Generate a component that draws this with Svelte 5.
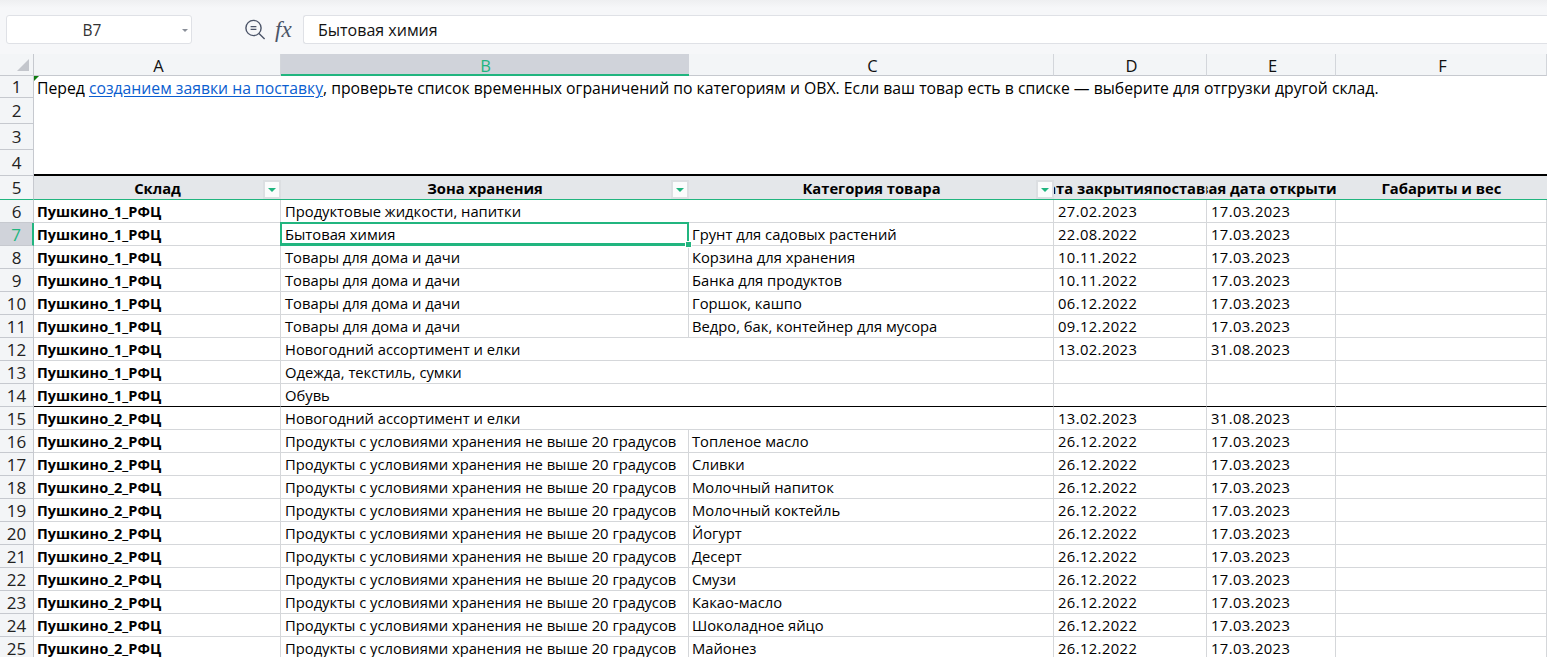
<script>
  const cols = ['A', 'B', 'C', 'D', 'E', 'F'];
  const c20 = 'Продукты с условиями хранения не выше 20 градусов';
  const home = 'Товары для дома и дачи';
  const p1 = 'Пушкино_1_РФЦ';
  const p2 = 'Пушкино_2_РФЦ';
  const x = '26.12.2022';
  const y = '17.03.2023';
  const rows = [
    [6, p1, 'Продуктовые жидкости, напитки', null, '27.02.2023', y],
    [7, p1, 'Бытовая химия', 'Грунт для садовых растений', '22.08.2022', y],
    [8, p1, home, 'Корзина для хранения', '10.11.2022', y],
    [9, p1, home, 'Банка для продуктов', '10.11.2022', y],
    [10, p1, home, 'Горшок, кашпо', '06.12.2022', y],
    [11, p1, home, 'Ведро, бак, контейнер для мусора', '09.12.2022', y],
    [12, p1, 'Новогодний ассортимент и елки', null, '13.02.2023', '31.08.2023'],
    [13, p1, 'Одежда, текстиль, сумки', null, '', ''],
    [14, p1, 'Обувь', null, '', ''],
    [15, p2, 'Новогодний ассортимент и елки', null, '13.02.2023', '31.08.2023'],
    [16, p2, c20, 'Топленое масло', x, y],
    [17, p2, c20, 'Сливки', x, y],
    [18, p2, c20, 'Молочный напиток', x, y],
    [19, p2, c20, 'Молочный коктейль', x, y],
    [20, p2, c20, 'Йогурт', x, y],
    [21, p2, c20, 'Десерт', x, y],
    [22, p2, c20, 'Смузи', x, y],
    [23, p2, c20, 'Какао-масло', x, y],
    [24, p2, c20, 'Шоколадное яйцо', x, y],
    [25, p2, c20, 'Майонез', x, y]
  ];
</script>

<div class="page">
  <div class="toolbar">
    <div class="namebox"><span>B7</span><i class="caret"></i></div>
    <div class="fxicons">
      <svg width="22" height="22" viewBox="0 0 22 22" fill="none" stroke="#4b5468" stroke-width="1.4">
        <circle cx="9.5" cy="9" r="7.6" />
        <path d="M15 14.6 20.6 20M6.6 7.6h5.8M6.6 10.4h5.8" />
      </svg>
      <span class="fx">fx</span>
    </div>
    <div class="formula">Бытовая химия</div>
  </div>

  <div class="sheet">
    <div class="corner"><i></i></div>
    {#each cols as c}
      <div class="colhead" class:active={c === 'B'}>{c}</div>
    {/each}

    {#each [1, 2, 3, 4] as n, i}
      <div class="rowhead tall" style="grid-row: {i + 2}">{n}</div>
    {/each}
    <div class="note">
      <i class="flag"></i>
      Перед <a href="#top">созданием заявки на поставку</a>, проверьте список временных ограничений по категориям и ОВХ. Если ваш товар есть в списке — выберите для отгрузки другой склад.
    </div>

    <div class="rowhead hrow">5</div>
    <div class="th">Склад<b class="filter"><i></i></b></div>
    <div class="th">Зона хранения<b class="filter"><i></i></b></div>
    <div class="th">Категория товара<b class="filter"><i></i></b></div>
    <div class="th"><span>Дата закрытияпоставки</span></div>
    <div class="th"><span>Новая дата открытияпо</span></div>
    <div class="th">Габариты и вес</div>

    {#each rows as r}
      <div class="rowhead" class:sel={r[0] === 7}>{r[0]}</div>
      <div class="td bold" class:heavy={r[0] === 14}>{r[1]}</div>
      {#if r[3] === null}
        <div class="td wide zone" class:heavy={r[0] === 14}>{r[2]}</div>
      {:else}
        <div class="td zone" class:current={r[0] === 7}>{r[2]}{#if r[0] === 7}<i class="handle"></i>{/if}</div>
        <div class="td">{r[3]}</div>
      {/if}
      <div class="td date" class:heavy={r[0] === 14}>{r[4]}</div>
      <div class="td date" class:heavy={r[0] === 14}>{r[5]}</div>
      <div class="td" class:heavy={r[0] === 14}></div>
    {/each}
  </div>
</div>

<style>
  :global(body) {
    margin: 0;
    background: #fff;
    overflow: hidden;
  }
  .page {
    height: 657px;
    overflow: hidden;
    font-family: "Open Sans", "Noto Sans", sans-serif;
    color: #000;
  }
  .toolbar {
    height: 54px;
    box-sizing: border-box;
    display: flex;
    align-items: flex-start;
    padding: 15px 0 0 6px;
    background: linear-gradient(#eeeff1 0, #f6f7f9 8px);
  }
  .namebox {
    width: 186px;
    height: 29px;
    box-sizing: border-box;
    border: 1px solid #dfe1e6;
    border-radius: 3px;
    background: #fff;
    display: flex;
    align-items: center;
    justify-content: center;
    padding-right: 14px;
    font-size: 15.5px;
    color: #333;
    position: relative;
  }
  .caret {
    position: absolute;
    right: 3px;
    top: 13px;
    border: 3px solid transparent;
    border-top-color: #8a8f99;
  }
  .fxicons {
    width: 111px;
    height: 29px;
    box-sizing: border-box;
    padding-left: 52px;
    display: flex;
    align-items: center;
    gap: 9px;
  }
  .fx {
    font-family: "Liberation Serif", serif;
    font-style: italic;
    font-size: 23px;
    line-height: 24px;
    color: #4b5468;
  }
  .formula {
    flex: 1;
    height: 29px;
    box-sizing: border-box;
    border: 1px solid #dfe1e6;
    border-right: 0;
    border-radius: 3px 0 0 3px;
    background: #fff;
    padding-left: 14px;
    font-size: 16px;
    line-height: 28px;
    color: #111;
  }
  .sheet {
    display: grid;
    grid-template-columns: 34px 247px 408px 365px 153px 129px 211px;
    grid-template-rows: 22px 22px 26px 26px 26px 24px repeat(20, 23px);
    font-size: 14.75px;
  }
  .corner {
    background: #f3f5f7;
    border-right: 1px solid #c6c9cf;
    border-bottom: 1px solid #c6c9cf;
    box-sizing: border-box;
    position: relative;
  }
  .corner i {
    position: absolute;
    right: 4px;
    bottom: 4px;
    width: 0;
    height: 0;
    border-left: 12px solid transparent;
    border-bottom: 12px solid #c3c6cc;
  }
  .colhead {
    background: #f3f5f7;
    border-right: 1px solid #d3d6db;
    border-bottom: 1px solid #c6c9cf;
    box-sizing: border-box;
    display: flex;
    align-items: center;
    justify-content: center;
    font-size: 16.5px;
    padding: 2px 0 0 3px;
    color: #111;
  }
  .colhead.active {
    background: #d0d3da;
    color: #21b57f;
    border-bottom: 2px solid #21b57f;
    border-right: 0;
    padding-left: 1px;
  }
  .rowhead {
    background: #f3f5f7;
    border-right: 1px solid #c6c9cf;
    border-bottom: 1px solid #c6c9cf;
    box-sizing: border-box;
    grid-column: 1;
    display: flex;
    align-items: center;
    justify-content: center;
    font-size: 17px;
    color: #222;
    overflow: hidden;
  }
  .rowhead.hrow {
    border-bottom: 1px solid #21b57f;
  }
  .rowhead.sel {
    background: #d0d3da;
    color: #21b57f;
    border-right: 2px solid #21b57f;
  }
  .note {
    grid-column: 2 / -1;
    grid-row: 2 / span 4;
    border-bottom: 2px solid #000;
    padding: 2px 3px 0;
    position: relative;
    white-space: nowrap;
    font-size: 15.75px;
    line-height: 20px;
    box-sizing: border-box;
  }
  .note a {
    color: #0b5ed0;
    text-decoration: underline;
    text-underline-offset: 2px;
  }
  .flag {
    position: absolute;
    left: 0;
    top: 0;
    border-top: 5px solid #107c10;
    border-right: 5px solid transparent;
  }
  .th {
    background: #e4e7ea;
    border-bottom: 1px solid #21b57f;
    box-sizing: border-box;
    font-weight: 700;
    display: flex;
    align-items: center;
    justify-content: center;
    overflow: hidden;
    white-space: nowrap;
    position: relative;
  }
  .th span {
    flex: none;
  }
  .filter {
    position: absolute;
    right: 0;
    top: 4px;
    width: 18px;
    height: 19px;
    box-sizing: border-box;
    background: #fbfcfc;
    border: 2px solid #dcdfe2;
  }
  .filter i {
    position: absolute;
    left: 3px;
    top: 6px;
    border: 4px solid transparent;
    border-top: 4px solid #21b57f;
    border-bottom: 0;
  }
  .td {
    border-right: 1px solid #d5d7da;
    border-bottom: 1px solid #d5d7da;
    box-sizing: border-box;
    padding-left: 3px;
    line-height: 22px;
    white-space: nowrap;
    overflow: hidden;
  }
  .td.bold {
    font-weight: 700;
    font-size: 14.5px;
    line-height: 24px;
  }
  .td.zone {
    padding-left: 4px;
  }
  .td.date {
    padding-left: 4px;
    letter-spacing: 0.4px;
  }
  .td.wide {
    grid-column: span 2;
  }
  .heavy {
    border-bottom-color: #000;
  }
  .td.current {
    overflow: visible;
    position: relative;
    z-index: 1;
  }
  .td.current::after {
    content: "";
    position: absolute;
    inset: -1px -1px -1px -1px;
    border: 2px solid #21b57f;
    border-bottom-width: 3px;
    pointer-events: none;
  }
  .handle {
    position: absolute;
    right: -4px;
    bottom: -3px;
    width: 5px;
    height: 5px;
    background: #21b57f;
    border: 1px solid #fff;
    z-index: 1;
  }
</style>
